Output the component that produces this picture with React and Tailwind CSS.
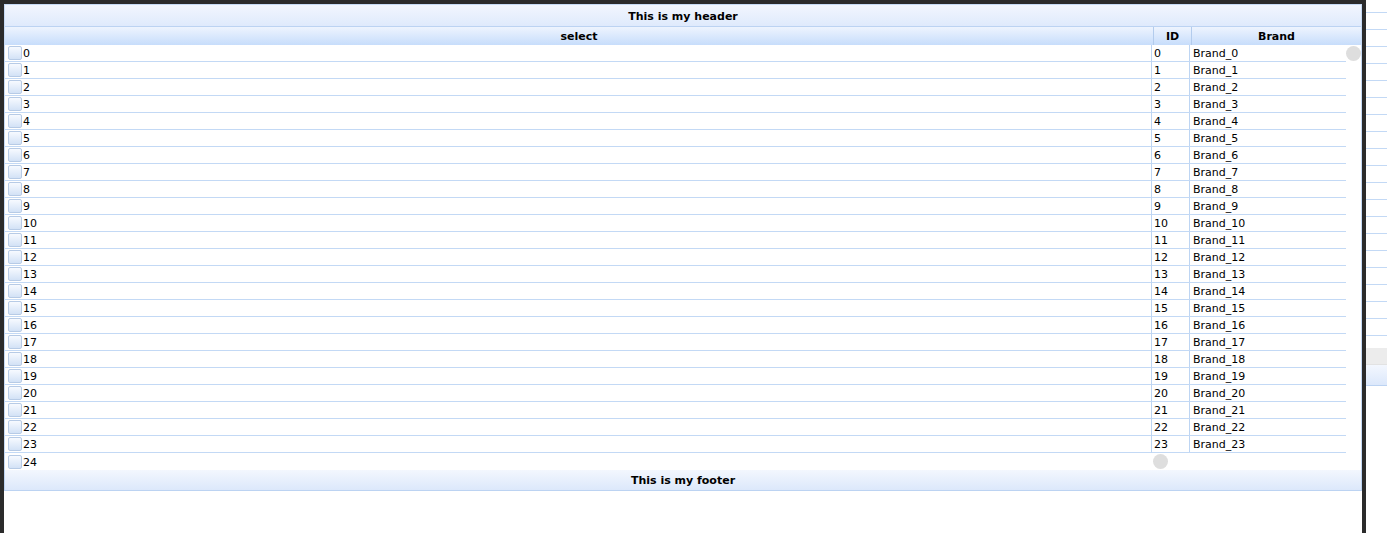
const rows = Array.from({ length: 25 }, (_, i) => i);
const stripLines = Array.from({ length: 19 }, (_, i) => i);

const Checkbox = () => (
    <span className="ml-[3px] mr-px inline-block h-[14px] w-[14px] shrink-0 rounded-[2px] border border-[#b7cbe6] bg-gradient-to-b from-[#f7faff] to-[#d3e2f6]" />
);

export default function App() {
    return (
        <div className="flex h-[533px] w-[1387px] overflow-hidden bg-white font-['DejaVu_Sans',sans-serif] text-[11px] leading-none text-black">
            <div className="flex h-full w-[1366px] shrink-0 flex-col border-x-4 border-t-4 border-[#2b2b2b]">
                <div className="flex flex-col border border-b-0 border-[#c6daf5]">
                    <div className="flex h-[22px] items-center justify-center border-b border-[#bcd3f2] bg-gradient-to-b from-[#f2f6fe] to-[#dfeafc] pt-px font-bold">
                        This is my header
                    </div>
                    <div className="flex h-[18px] bg-gradient-to-b from-[#eef4fe] to-[#c7ddfb] font-bold">
                        <div className="flex w-[1149px] items-center justify-center border-r border-[#b3cced]">
                            select
                        </div>
                        <div className="flex w-[38px] items-center justify-center border-r border-[#b3cced]">
                            ID
                        </div>
                        <div className="flex flex-1 items-center justify-center">
                            Brand
                        </div>
                    </div>
                    <div className="flex">
                        <div className="flex w-[1149px] flex-col">
                            <div className="flex flex-col border-r border-[#bdd5f3]">
                                {rows.slice(0, 24).map((i) => (
                                    <div
                                        key={i}
                                        className="flex h-[17px] items-center border-b border-[#c3d9f5]"
                                    >
                                        <Checkbox />
                                        <span className="pt-px">{i}</span>
                                    </div>
                                ))}
                            </div>
                            <div className="flex h-[17px] items-center">
                                <Checkbox />
                                <span className="pt-px">24</span>
                            </div>
                        </div>
                        <div className="flex flex-1">
                            <div className="flex w-[194px] flex-col">
                                {rows.slice(0, 24).map((i) => (
                                    <div
                                        key={i}
                                        className="flex h-[17px] border-b border-[#c3d9f5] last:border-b-0"
                                    >
                                        <div className="flex w-[38px] items-center border-r border-[#bdd5f3] pl-[2px] pt-px">
                                            {i}
                                        </div>
                                        <div className="flex flex-1 items-center pl-[3px] pt-px">
                                            Brand_{i}
                                        </div>
                                    </div>
                                ))}
                                <div className="flex h-[17px] items-center pl-px">
                                    <span className="h-[15px] w-[15px] rounded-full bg-[#dedede]" />
                                </div>
                            </div>
                            <div className="flex flex-1 justify-center pt-px">
                                <span className="h-[15px] w-[15px] rounded-full bg-[#dedede]" />
                            </div>
                        </div>
                    </div>
                </div>
                <div className="flex h-[21px] items-center justify-center border-x border-b border-[#bcd3f2] bg-gradient-to-b from-[#f3f7fe] to-[#dce8fb] pt-px font-bold">
                    This is my footer
                </div>
            </div>
            <div className="flex flex-1 flex-col">
                <div className="h-[12px]" />
                {stripLines.map((i) => (
                    <div key={i} className="h-[17px] border-t border-[#c3d9f5]" />
                ))}
                <div className="h-[13px] border-t border-[#c3d9f5]" />
                <div className="h-[17px] border-b border-[#e2e2e2] bg-[#ececec]" />
                <div className="h-[21px] border-b border-[#bcd3f2] bg-gradient-to-b from-[#f3f7fe] to-[#dce8fb]" />
            </div>
        </div>
    );
}
